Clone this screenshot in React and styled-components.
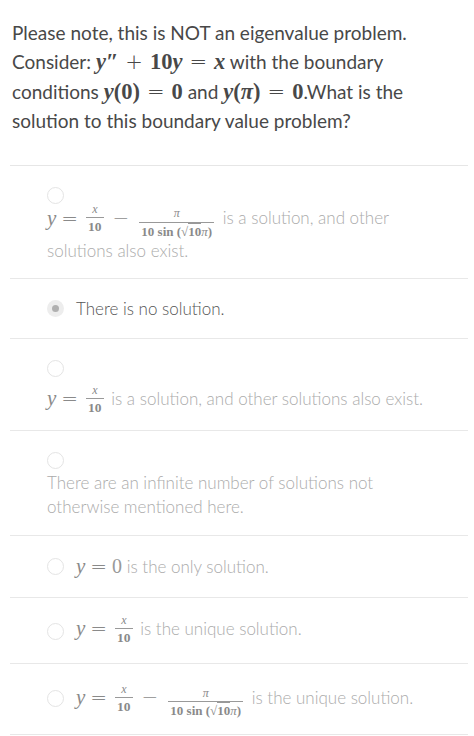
import React from "react";
import styled, { createGlobalStyle, css } from "styled-components";

const Global = createGlobalStyle`
  html, body { margin: 0; padding: 0; background: #fff; }
  body { font-family: Lato, "Open Sans", sans-serif; }
`;

const Page = styled.div`
  padding: 0 6px 0 10px;
  width: 474px;
  box-sizing: border-box;
`;

const Question = styled.p`
  margin: 0;
  padding: 18px 0 30px 2px;
  font-size: 19px;
  line-height: 29.3px;
  color: #484848;
  border-bottom: 1px solid #e6e6e6;
`;

const Options = styled.div`
  display: flex;
  flex-direction: column;
`;

const Option = styled.div`
  border-bottom: 1px solid #e8e8e8;
  padding: ${(p) => p.$pad || "18px 30px 17px 37px"};
  display: flex;
  ${(p) =>
    p.$stacked
      ? css`
          flex-direction: column;
          align-items: flex-start;
          gap: ${p.$gap || "4px"};
        `
      : css`
          flex-direction: row;
          align-items: center;
          gap: 12px;
        `}
`;

const Radio = styled.span`
  flex: none;
  width: 17px;
  height: 17px;
  border-radius: 50%;
  box-sizing: border-box;
  border: 1.5px solid #e4e4e4;
  background: #fff;
  position: relative;
  ${(p) =>
    p.$checked &&
    css`
      border: none;
      background: #ededed;
      &::after {
        content: "";
        position: absolute;
        left: 5px;
        top: 5px;
        width: 7px;
        height: 7px;
        border-radius: 50%;
        background: #b0b0b0;
      }
    `}
`;

const Label = styled.div`
  font-size: 17px;
  font-weight: 300;
  line-height: ${(p) => p.$lh || "24px"};
  color: ${(p) => (p.$dark ? "#555" : "#ababab")};
`;

const M = styled.span`
  font-family: "Liberation Serif", "DejaVu Serif", serif;
  font-style: ${(p) => (p.$up ? "normal" : "italic")};
  font-weight: ${(p) => (p.$bold ? 700 : 400)};
  font-size: ${(p) => p.$size || "21px"};
  line-height: 1;
  color: ${(p) => p.$color || "inherit"};
`;

const Op = styled.span`
  font-family: "DejaVu Sans", sans-serif;
  font-weight: 300;
  font-size: ${(p) => p.$size || "20px"};
  line-height: 1;
  margin: 0 ${(p) => p.$space || "5px"};
  color: ${(p) => p.$color || "inherit"};
`;

const MathRow = styled.span`
  white-space: nowrap;
  color: ${(p) => p.$color || "#8a8a8a"};
`;

const Frac = styled.span`
  display: inline-flex;
  flex-direction: column;
  align-items: center;
  vertical-align: middle;
  margin: 0 ${(p) => p.$mx || "3px"};
  font-family: "Liberation Serif", "DejaVu Serif", serif;
  position: relative;
  top: ${(p) => p.$top || "-1px"};
`;

const Num = styled.span`
  font-size: ${(p) => p.$size || "12px"};
  font-style: italic;
  line-height: 1.1;
  padding: 0 2px 1px;
`;

const Den = styled.span`
  font-size: ${(p) => p.$size || "13.5px"};
  font-weight: 700;
  line-height: 1.2;
  padding: 1px 2px 0;
  border-top: 1px solid #999;
  align-self: stretch;
  text-align: center;
  white-space: nowrap;
`;

const Sqrt = styled.span`
  white-space: nowrap;
  &::before {
    content: "√";
    font-weight: 400;
  }
`;

const Radicand = styled.span`
  border-top: 1px solid #999;
`;

function SmallFrac() {
  return (
    <Frac>
      <Num>x</Num>
      <Den>10</Den>
    </Frac>
  );
}

function BigFrac() {
  return (
    <Frac $mx="4px" $top="3px">
      <Num $size="12px">π</Num>
      <Den $size="13px">
        10 sin (<Sqrt><Radicand>10</Radicand></Sqrt><M $size="13px">π</M>)
      </Den>
    </Frac>
  );
}

function FullExpr() {
  return (
    <MathRow>
      <M>y</M>
      <Op>=</Op>
      <SmallFrac />
      <Op $space="6px">−</Op>
      <BigFrac />
    </MathRow>
  );
}

const qs = "22.5px";

export default function App() {
  return (
    <Page>
      <Global />
      <Question>
        Please note, this is NOT an eigenvalue problem. Consider:{" "}
        <M $bold $size={qs}>y″</M>
        <Op $size="21px" $space="7px">+</Op>
        <M $bold $up $size={qs}>10</M>
        <M $bold $size={qs}>y</M>
        <Op $size="21px" $space="7px">=</Op>
        <M $bold $size={qs}>x</M> with the boundary conditions{" "}
        <M $bold $size={qs}>y</M>
        <M $bold $up $size={qs}>(0)</M>
        <Op $size="21px" $space="7px">=</Op>
        <M $bold $up $size={qs}>0</M> and{" "}
        <M $bold $size={qs}>y</M>
        <M $bold $up $size={qs}>(</M>
        <M $bold $size={qs}>π</M>
        <M $bold $up $size={qs}>)</M>
        <Op $size="21px" $space="7px">=</Op>
        <M $bold $up $size={qs}>0</M>.What is the solution to this boundary value problem?
      </Question>
      <Options>
        <Option $stacked $pad="21px 30px 13px 37px" $gap="0px">
          <Radio />
          <Label $lh="28px">
            <FullExpr /> is a solution, and other solutions also exist.
          </Label>
        </Option>
        <Option>
          <Radio $checked />
          <Label $dark>There is no solution.</Label>
        </Option>
        <Option $stacked $pad="21px 30px 13px 37px" $gap="8px">
          <Radio />
          <Label $lh="28px">
            <MathRow>
              <M>y</M>
              <Op>=</Op>
              <SmallFrac />
            </MathRow>{" "}
            is a solution, and other solutions also exist.
          </Label>
        </Option>
        <Option $stacked $pad="21px 30px 16px 37px" $gap="2px">
          <Radio />
          <Label>
            There are an infinite number of solutions not otherwise mentioned here.
          </Label>
        </Option>
        <Option $pad="19px 30px 18px 37px">
          <Radio />
          <Label>
            <MathRow>
              <M>y</M>
              <Op>=</Op>
              <M $up $size="20px" $color="#999">0</M>
            </MathRow>{" "}
            is the only solution.
          </Label>
        </Option>
        <Option $pad="17px 30px 16px 37px">
          <Radio />
          <Label $lh="28px">
            <MathRow>
              <M>y</M>
              <Op>=</Op>
              <SmallFrac />
            </MathRow>{" "}
            is the unique solution.
          </Label>
        </Option>
        <Option $pad="16px 30px 18px 37px">
          <Radio />
          <Label $lh="36px">
            <FullExpr /> is the unique solution.
          </Label>
        </Option>
      </Options>
    </Page>
  );
}
